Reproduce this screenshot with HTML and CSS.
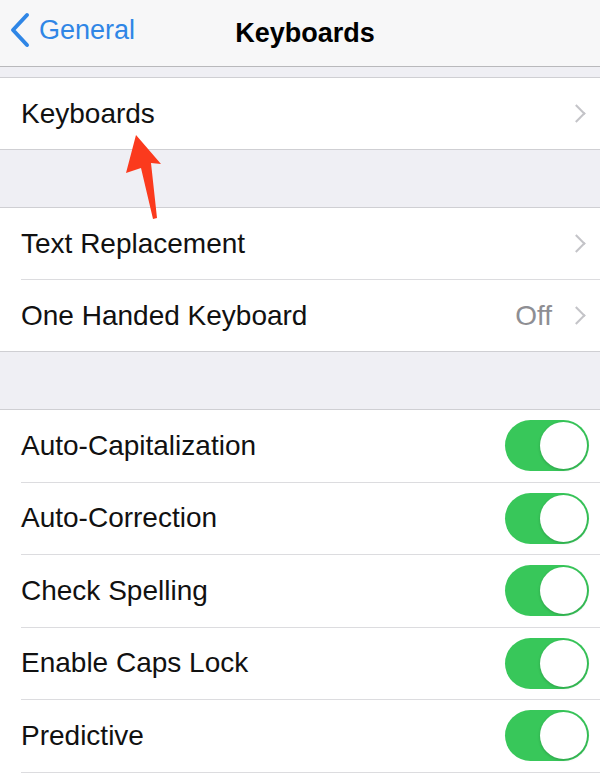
FILE: index.html
```html
<!DOCTYPE html>
<html>
<head>
  <meta charset="UTF-8">
  <title>Keyboards</title>
  <link rel="stylesheet" href="styles.css">
</head>
<body>
  <div class="screen">
    <!-- 顶部导航栏 -->
    <div class="nav">
      <div class="back">
        <svg class="back-icon" width="22" height="36" viewBox="0 0 22 36">
          <path d="M18 3 L4 18 L18 33" fill="none" stroke="#2f86e6" stroke-width="4" stroke-linecap="round" stroke-linejoin="round"/>
        </svg>
        <span>General</span>
      </div>
      <div class="title">Keyboards</div>
    </div>

    <ul class="group first">
      <li class="row">
        <span class="label">Keyboards</span>
        <span class="chevron"></span>
      </li>
    </ul>

    <ul class="group">
      <li class="row">
        <span class="label">Text Replacement</span>
        <span class="chevron"></span>
      </li>
      <li class="row">
        <span class="label">One Handed Keyboard</span>
        <span class="value">Off</span>
        <span class="chevron"></span>
      </li>
    </ul>

    <!-- 列表还在往下延伸，底部只露出一截 -->
    <ul class="group toggles">
      <li class="row"><span class="label">Auto-Capitalization</span><span class="switch on"></span></li>
      <li class="row"><span class="label">Auto-Correction</span><span class="switch on"></span></li>
      <li class="row"><span class="label">Check Spelling</span><span class="switch on"></span></li>
      <li class="row"><span class="label">Enable Caps Lock</span><span class="switch on"></span></li>
      <li class="row"><span class="label">Predictive</span><span class="switch on"></span></li>
    </ul>

    <!-- 红色标注箭头 -->
    <svg class="arrow" width="600" height="776" viewBox="0 0 600 776">
      <polygon points="136,135 161,164 151,163 157,218 153,219 141,168 126,173" fill="#fb3a1d"/>
    </svg>
  </div>
</body>
</html>
```

FILE: styles.css
```css
html, body, ul, li {
  margin: 0;
  padding: 0;
  list-style: none;
}
body {
  background: #efeff4;
  font-family: "Liberation Sans", Arial, sans-serif;
  color: #111;
}
.screen {
  position: relative;
  width: 600px;
  height: 776px;
  overflow: hidden;
}
.nav {
  height: 66px;
  background: #f7f7f8;
  border-bottom: 1px solid #b9b9bc;
  display: flex;
  align-items: center;
  justify-content: center;
  position: relative;
}
.back {
  position: absolute;
  left: 9px;
  top: 12px;
  display: flex;
  align-items: center;
  gap: 8px;
  color: #2f86e6;
  font-size: 27px;
}
.title {
  font-size: 27px;
  font-weight: bold;
  color: #000;
  margin-left: 10px;
}
.group {
  background: #fff;
  border-top: 1px solid #cfcfd3;
  border-bottom: 1px solid #cfcfd3;
  margin-top: 57px;
  padding-left: 21px;
}
.group.first {
  margin-top: 10px;
}
.row {
  height: 71px;
  display: flex;
  align-items: center;
  padding-right: 11px;
  border-bottom: 1px solid #dcdcdf;
}
.row:last-child {
  border-bottom: none;
}
.toggles {
  padding-bottom: 20px;
}
.toggles .row {
  height: 71.5px;
}
.toggles .row:last-child {
  border-bottom: 1px solid #dcdcdf;
}
.label {
  flex: 1;
  font-size: 28px;
}
.value {
  font-size: 28px;
  color: #8e8e93;
  margin-right: 18px;
}
.chevron {
  width: 11px;
  height: 11px;
  border-top: 2.5px solid #c4c4c8;
  border-right: 2.5px solid #c4c4c8;
  transform: rotate(45deg);
  margin-right: 6px;
}
.switch {
  width: 84px;
  height: 51px;
  border-radius: 26px;
  background: #38c75a;
  position: relative;
}
.switch::after {
  content: "";
  position: absolute;
  top: 2px;
  right: 2px;
  width: 47px;
  height: 47px;
  border-radius: 50%;
  background: #fff;
  box-shadow: 0 1px 3px rgba(0, 0, 0, 0.2);
}
.arrow {
  position: absolute;
  left: 0;
  top: 0;
  pointer-events: none;
}
```
